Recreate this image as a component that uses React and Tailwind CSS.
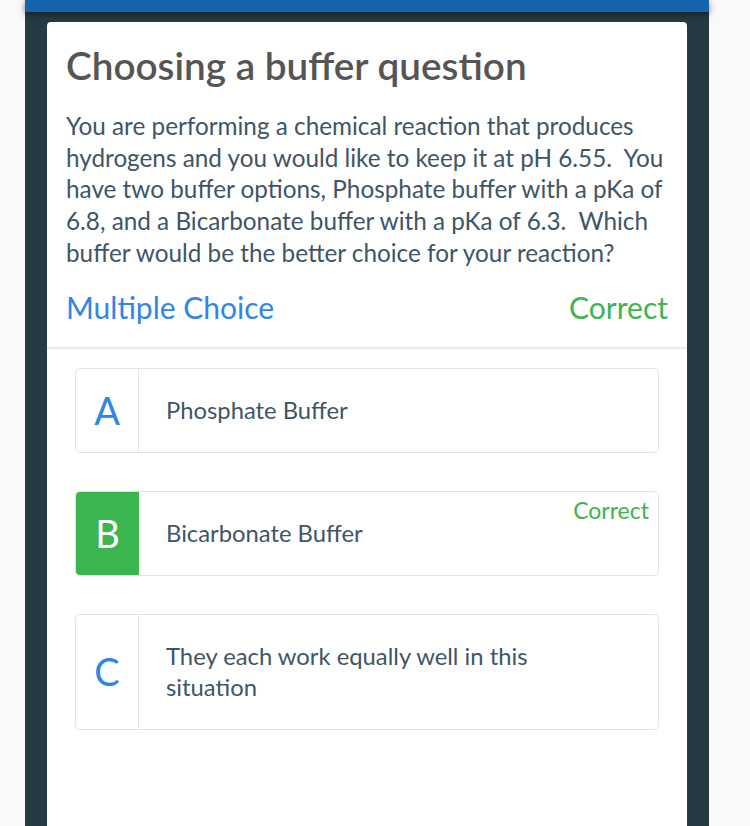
import React from 'react';

const options = [
  { key: 'A', text: 'Phosphate Buffer' },
  { key: 'B', text: 'Bicarbonate Buffer', correct: true },
  { key: 'C', text: 'They each work equally well in this situation' },
];

function Option({ option }) {
  return (
    <div className="flex rounded-[5px] border border-[#e3e3e3] bg-white">
      <div
        className={
          option.correct
            ? 'flex w-[63px] shrink-0 items-center justify-center rounded-l-[4px] bg-[#3bb54f] text-[38px] text-white'
            : 'flex w-[63px] shrink-0 items-center justify-center border-r border-[#e3e3e3] text-[38px] text-[#2f86e8]'
        }
      >
        {option.key}
      </div>
      <div className="relative flex-1 py-[26px] pl-[27px] pr-[110px] text-[23.8px] leading-[31px] text-[#3f5566]">
        {option.text}
        {option.correct && (
          <span className="absolute right-[9px] top-[3px] text-[23px] leading-[30px] text-[#3bb54f]">Correct</span>
        )}
      </div>
    </div>
  );
}

export default function App() {
  return (
    <div className="h-[826px] overflow-hidden bg-[#f9f9f9] font-['Lato',sans-serif]">
      <div className="mx-[25px] h-full w-[684px] bg-[#273943]">
        <div className="h-[12px] bg-[#1464ae] shadow-[0_2px_6px_rgba(0,0,0,0.5)]" />
        <div className="mx-[22px] mt-[10px] h-[900px] rounded-t-[4px] bg-white">
          <div className="px-[19px] pt-[20px] pb-[20px]">
            <h1 className="text-[38.7px] font-semibold leading-[46px] text-[#555555]">
              Choosing a buffer question
            </h1>
            <p className="mt-[22px] text-[24.3px] leading-[31.7px] text-[#3f5566]">
              You are performing a chemical reaction that produces
              <br />
              hydrogens and you would like to keep it at pH 6.55.&nbsp; You
              <br />
              have two buffer options, Phosphate buffer with a pKa of
              <br />
              6.8, and a Bicarbonate buffer with a pKa of 6.3.&nbsp; Which
              <br />
              buffer would be the better choice for your reaction?
            </p>
            <div className="mt-[18px] flex items-center justify-between text-[30px] leading-[40px]">
              <span className="text-[#2f86e8]">Multiple Choice</span>
              <span className="text-[#3bb54f]">Correct</span>
            </div>
          </div>
          <div className="border-t-2 border-[#ececec] px-[28px] pt-[19px]">
            <div className="flex flex-col gap-[38px]">
              {options.map((o) => (
                <Option key={o.key} option={o} />
              ))}
            </div>
          </div>
        </div>
      </div>
    </div>
  );
}
